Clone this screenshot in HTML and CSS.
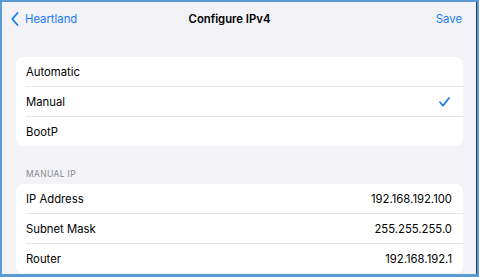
FILE: index.html
```html
<!DOCTYPE html>
<html>
<head>
<meta charset="utf-8">
<link rel="stylesheet" href="styles.css">
</head>
<body>
<div class="frame">
  <div class="screen">
    <div class="nav">
      <div class="back">
        <svg class="chev" width="8" height="14" viewBox="0 0 8 14"><path d="M6.5 1 L1.3 7 L6.5 13" fill="none" stroke="#1a7cf5" stroke-width="1.9" stroke-linecap="round" stroke-linejoin="round"/></svg>
        <span>Heartland</span>
      </div>
      <div class="title">Configure IPv4</div>
      <div class="save">Save</div>
    </div>
    <div class="card first">
      <div class="row"><span>Automatic</span></div>
      <div class="row"><span>Manual</span>
        <svg class="check" width="11" height="10" viewBox="0 0 11 10"><path d="M1 5.2 L4 8.6 L10 1" fill="none" stroke="#1a7cf5" stroke-width="1.7" stroke-linecap="round" stroke-linejoin="round"/></svg>
      </div>
      <div class="row"><span>BootP</span></div>
    </div>
    <div class="section">MANUAL IP</div>
    <div class="card">
      <div class="row"><span>IP Address</span><span class="val">192.168.192.100</span></div>
      <div class="row"><span>Subnet Mask</span><span class="val">255.255.255.0</span></div>
      <div class="row"><span>Router</span><span class="val">192.168.192.1</span></div>
    </div>
  </div>
</div>
</body>
</html>
```
FILE: styles.css
```css
html, body {
  margin: 0;
  padding: 0;
}
body {
  width: 479px;
  height: 277px;
  background: #5b9bd5;
  font-family: Inter, "Liberation Sans", sans-serif;
  overflow: hidden;
}
.frame {
  width: 479px;
  height: 277px;
  padding: 2px 2px 3px 2px;
  box-sizing: border-box;
}
.screen {
  width: 475px;
  height: 272px;
  box-sizing: border-box;
  background: #f2f2f7;
  border-right: 1px solid #3a3a3c;
  overflow: hidden;
  padding: 0 13px 0 14px;
}
.nav {
  height: 33px;
  display: grid;
  grid-template-columns: 1fr auto 1fr;
  align-items: center;
  margin: 0 -13px 0 -14px;
  padding: 0 14px 0 9px;
  font-size: 11.3px;
}
.back {
  display: flex;
  align-items: center;
  gap: 6px;
  color: #1a7cf5;
}
.chev {
  display: block;
}
.title {
  font-weight: 600;
  color: #000;
  margin-right: 14px;
}
.save {
  justify-self: end;
  color: #1a7cf5;
}
.card {
  background: #fff;
  border-radius: 7px;
  padding-left: 10px;
}
.card.first {
  margin-top: 22px;
}
.row {
  height: 29px;
  display: flex;
  align-items: center;
  justify-content: space-between;
  padding-right: 11px;
  font-size: 11.3px;
  color: #000;
  border-top: 1px solid #e6e6ea;
}
.row:first-child {
  border-top: none;
}
.check {
  display: block;
  margin-right: 2px;
}
.val {
  color: #000;
}
.section {
  height: 38px;
  box-sizing: border-box;
  padding: 23px 0 0 10px;
  font-size: 8.5px;
  color: #8a8a8e;
  letter-spacing: 0.35px;
}
```
